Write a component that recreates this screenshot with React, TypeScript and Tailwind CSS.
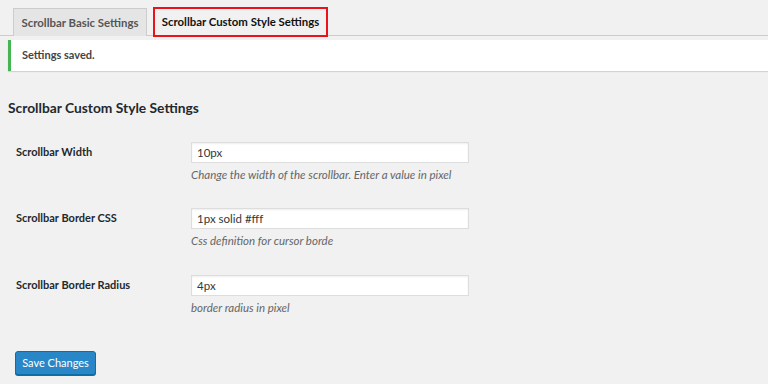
export default function App() {
  const font = { fontFamily: 'Lato, "Open Sans", Arial, sans-serif' };
  const rows = [
    { label: "Scrollbar Width", value: "10px", desc: "Change the width of the scrollbar. Enter a value in pixel", mt: "mt-[25px]" },
    { label: "Scrollbar Border CSS", value: "1px solid #fff", desc: "Css definition for cursor borde", mt: "mt-[25px]" },
    { label: "Scrollbar Border Radius", value: "4px", desc: "border radius in pixel", mt: "mt-[26px]" },
  ];
  return (
    <div className="w-[768px] h-[384px] bg-[#f1f1f1] overflow-hidden text-[#23282d]" style={font}>
      <div className="pt-[8px] pl-[13px] flex items-end gap-[6px] border-b border-[#cccccc] h-[36px]">
        <div className="h-[28px] w-[134px] whitespace-nowrap bg-[#e5e5e5] border border-[#cccccc] border-b-0 flex items-center justify-center text-[11.4px] font-bold text-[#555555] -mb-px">
          Scrollbar Basic Settings
        </div>
        <div className="h-[30px] w-[175px] whitespace-nowrap bg-[#f1f1f1] border-2 border-[#e8131b] flex items-center justify-center text-[11.4px] font-bold text-[#111111] -mb-[2px]">
          Scrollbar Custom Style Settings
        </div>
      </div>
      <div className="mt-[4px] ml-[8px] h-[31px] bg-white border-l-[3px] border-[#46b450] shadow-[0_1px_1px_rgba(0,0,0,0.12)] flex items-center pl-[11px] text-[11px] font-bold text-[#444444]">
        Settings saved.
      </div>
      <div className="mt-[27px] pl-[8px] text-[13.8px] font-bold leading-[20px] text-[#23282d]">
        Scrollbar Custom Style Settings
      </div>
      {rows.map((r, i) => (
        <div key={r.label} className={`${i === 0 ? "mt-[24px]" : r.mt} flex pl-[16px]`}>
          <div className="w-[175px] h-[21px] flex items-center text-[11px] font-bold text-[#23282d]">{r.label}</div>
          <div className="flex flex-col">
            <div className="w-[278px] h-[21px] bg-white border border-[#dddddd] shadow-[inset_0_1px_2px_rgba(0,0,0,0.07)] flex items-center pl-[5px] text-[11.5px] text-[#32373c]">
              {r.value}
            </div>
            <div className="mt-[4px] text-[11.5px] italic text-[#666666] leading-[16px]">{r.desc}</div>
          </div>
        </div>
      ))}
      <div className="mt-[35px] pl-[15px]">
        <button className="h-[24px] w-[81px] rounded-[3px] bg-[#2a87c7] border border-[#0d6ea8] shadow-[0_1px_0_#0073aa] text-white text-[11px] flex items-center justify-center">
          Save Changes
        </button>
      </div>
    </div>
  );
}
